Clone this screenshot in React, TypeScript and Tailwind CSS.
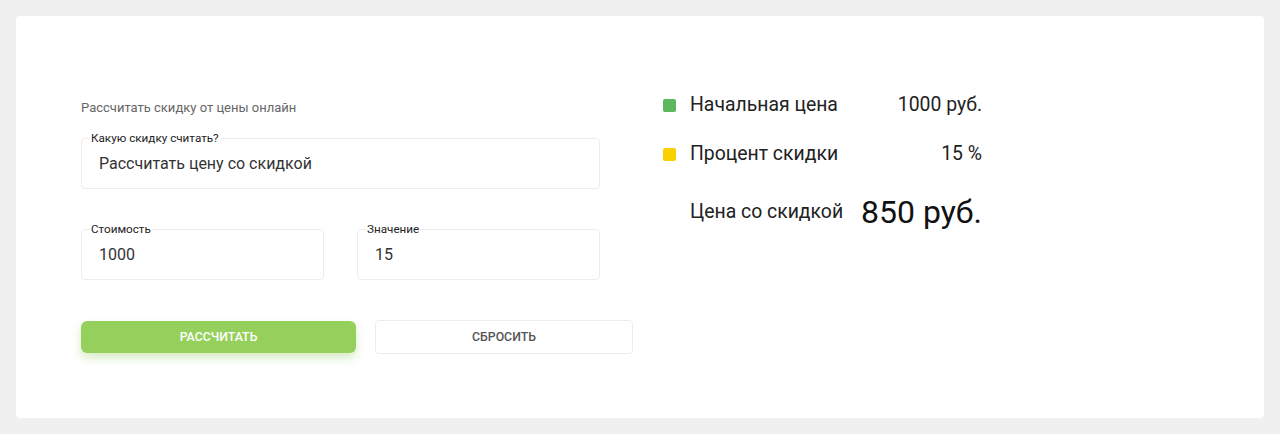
import React, { useState } from 'react';

const Field: React.FC<{ label: string; value: string; className?: string }> = ({ label, value, className }) => (
    <div className={`relative h-[51px] rounded border border-[#ececec] flex items-center pl-[17px] ${className ?? ''}`}>
        <span className="absolute -top-[8px] left-[8px] px-px bg-white text-[11.7px] leading-[14px] text-[#222]">{label}</span>
        <span className="text-[16px] text-[#333]">{value}</span>
    </div>
);

const App: React.FC = () => {
    const [price] = useState(1000);
    const [percent] = useState(15);
    const result = price - (price * percent) / 100;

    return (
        <div className="min-h-[434px] bg-[#f0f0f0] p-4 font-['Roboto',sans-serif]">
            <div className="h-[402px] bg-white rounded flex">
                {/* левая колонка */}
                <div className="w-[552px] ml-[65px] pt-[84px]">
                    <p className="text-[13px] leading-4 text-[#666]">Рассчитать скидку от цены онлайн</p>
                    <Field className="mt-[22px] w-[519px]" label="Какую скидку считать?" value="Рассчитать цену со скидкой" />
                    <div className="mt-10 flex gap-[33px]">
                        <Field className="w-[243px]" label="Стоимость" value={String(price)} />
                        <Field className="w-[243px]" label="Значение" value={String(percent)} />
                    </div>
                    <div className="mt-10 flex items-start gap-[19px]">
                        <button className="mt-px w-[275px] h-8 rounded-md bg-[#96d05c] text-white text-[12.3px] font-medium uppercase shadow-[0_5px_10px_rgba(140,200,90,0.35)]">
                            Рассчитать
                        </button>
                        <button className="w-[258px] h-[34px] rounded border border-[#ececec] bg-white text-[#555] text-[12.3px] font-medium uppercase">
                            Сбросить
                        </button>
                    </div>
                </div>

                {/* правая колонка: результат */}
                <div className="ml-[30px] w-[319px] pt-[77px] text-[#222]">
                    <div className="flex items-center h-6">
                        <span className="w-[13px] h-[13px] rounded-[2px] bg-[#5cb85c]" />
                        <span className="ml-[14px] text-[19.4px]">Начальная цена</span>
                        <span className="ml-auto text-[19.4px]">{price} руб.</span>
                    </div>
                    <div className="mt-[25px] flex items-center h-6">
                        <span className="w-[13px] h-[13px] rounded-[2px] bg-[#fad000]" />
                        <span className="ml-[14px] text-[19.4px]">Процент скидки</span>
                        <span className="ml-auto text-[19.4px]">{percent} %</span>
                    </div>
                    <div className="mt-[28px] pl-[27px] flex items-center justify-between h-9">
                        <span className="text-[19.4px]">Цена со скидкой</span>
                        <span className="text-[32px] leading-9 text-[#111]">{result} руб.</span>
                    </div>
                </div>
            </div>
        </div>
    );
};

export default App;
